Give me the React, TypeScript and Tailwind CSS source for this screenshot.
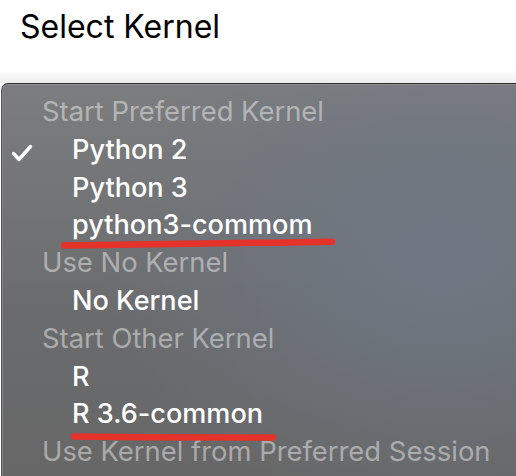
import React from "react";

type Row = { kind: "header" | "item"; text: string; checked?: boolean };

const rows: Row[] = [
  { kind: "header", text: "Start Preferred Kernel" },
  { kind: "item", text: "Python 2", checked: true },
  { kind: "item", text: "Python 3" },
  { kind: "item", text: "python3-commom" },
  { kind: "header", text: "Use No Kernel" },
  { kind: "item", text: "No Kernel" },
  { kind: "header", text: "Start Other Kernel" },
  { kind: "item", text: "R" },
  { kind: "item", text: "R 3.6-common" },
  { kind: "header", text: "Use Kernel from Preferred Session" },
];

function Check() {
  return (
    <svg width="22" height="20" viewBox="0 0 22 20" className="absolute left-[9px] top-[13px]">
      <path d="M2.5 9.5 L8 15.5 L19.5 2.5" fill="none" stroke="#ffffff" strokeWidth="3.4" strokeLinecap="round" strokeLinejoin="round" />
    </svg>
  );
}

export default function App() {
  return (
    <div className="relative w-[516px] h-[476px] overflow-hidden bg-white font-['Inter','Liberation_Sans',sans-serif]">
      <div className="h-[70px] pl-[20px] pt-[2px] text-[32px] leading-[50px] text-black">Select Kernel</div>
      <div className="h-[13px] bg-[linear-gradient(to_bottom,#ffffff,#ececec)]" />
      <div className="relative h-[393px] ml-[1px] rounded-tl-[7px] border-t border-l border-t-[#2e2e2e] border-l-[#555] bg-[radial-gradient(ellipse_340px_260px_at_440px_170px,#6f7884,transparent),linear-gradient(to_bottom,#7c7d7f,#6a6b6d_60%,#676767)] shadow-[inset_0_1px_0_#8e8f91,inset_1px_0_0_#838383] pt-[9px]">
        {rows.map((r, i) =>
          r.kind === "header" ? (
            <div key={i} className="h-[37.8px] leading-[37.8px] pl-[40px] text-[27.4px] text-white/45 whitespace-nowrap">
              {r.text}
            </div>
          ) : (
            <div key={i} className="relative h-[37.8px] leading-[37.8px] pl-[70px] text-[27.1px] font-medium text-white whitespace-nowrap">
              {r.checked && <Check />}
              {r.text}
            </div>
          )
        )}
      </div>
      <svg className="absolute left-0 top-0" width="516" height="476" viewBox="0 0 516 476">
        <path d="M64 245.5 C 140 244.5, 200 243.5, 260 242.8 S 320 241.5, 332 241.8" fill="none" stroke="#e5322a" strokeWidth="6.5" strokeLinecap="round" />
        <path d="M74 436.5 C 140 437.2, 210 437.6, 273 437.6" fill="none" stroke="#e5322a" strokeWidth="6.5" strokeLinecap="round" />
      </svg>
    </div>
  );
}
